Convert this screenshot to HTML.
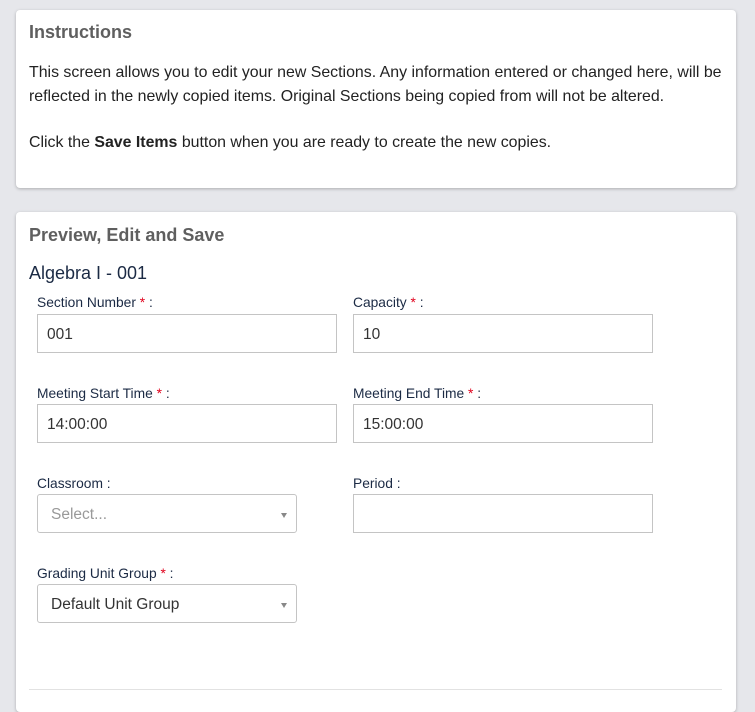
<!DOCTYPE html>
<html><head><style>
body{margin:0;width:755px;height:695px;background:#e6e7eb;font-family:"Liberation Sans",sans-serif;position:relative;overflow:hidden}
.card{position:absolute;left:16px;width:720px;background:#fff;border-radius:4px;box-shadow:0 1px 3px rgba(0,0,0,.25)}
.a{position:absolute;white-space:nowrap}
h{position:absolute;font-weight:bold;font-size:18px;color:#5f5f5f}
.t{font-size:15.9px;color:#222;line-height:24px}
.lbl{position:absolute;font-size:13.8px;color:#1b2a44}
.lbl i{color:#e0001b;font-style:normal}
.in{position:absolute;border:1px solid #c4c4c4;height:39px;box-sizing:border-box;font-size:15.5px;color:#333;padding:11px 9px 0;background:#fff}
.sel{border-radius:3px;padding-left:13px}
.sel:after{content:"";position:absolute;right:9px;top:18px;border:3.5px solid transparent;border-top:5px solid #888}
</style></head><body>
<div class="card" style="top:10px;height:178px">
<h style="left:13px;top:12px">Instructions</h>
<div class="a t" style="left:13px;top:51px">This screen allows you to edit your new Sections. Any information entered or changed here, will be<br>reflected in the newly copied items. Original Sections being copied from will not be altered.</div>
<div class="a t" style="left:13px;top:121px">Click the <b>Save Items</b> button when you are ready to create the new copies.</div>
</div>
<div class="card" style="top:212px;height:500px">
<h style="left:13px;top:13px">Preview, Edit and Save</h>
<div class="a" style="left:13px;top:51px;font-size:18px;color:#1b2a44">Algebra I - 001</div>
<div class="lbl" style="left:21px;top:83px">Section Number <i>*</i> :</div>
<div class="in" style="left:21px;top:102px;width:300px">001</div>
<div class="lbl" style="left:337px;top:83px">Capacity <i>*</i> :</div>
<div class="in" style="left:337px;top:102px;width:300px">10</div>
<div class="lbl" style="left:21px;top:174px">Meeting Start Time <i>*</i> :</div>
<div class="in" style="left:21px;top:192px;width:300px">14:00:00</div>
<div class="lbl" style="left:337px;top:174px">Meeting End Time <i>*</i> :</div>
<div class="in" style="left:337px;top:192px;width:300px">15:00:00</div>
<div class="lbl" style="left:21px;top:264px">Classroom :</div>
<div class="in sel" style="left:21px;top:282px;width:260px;color:#999">Select...</div>
<div class="lbl" style="left:337px;top:264px">Period :</div>
<div class="in" style="left:337px;top:282px;width:300px"></div>
<div class="lbl" style="left:21px;top:354px">Grading Unit Group <i>*</i> :</div>
<div class="in sel" style="left:21px;top:372px;width:260px">Default Unit Group</div>
<div class="a" style="left:13px;top:477px;width:693px;height:1px;background:#e2e2e2"></div>
</div>
</body></html>
